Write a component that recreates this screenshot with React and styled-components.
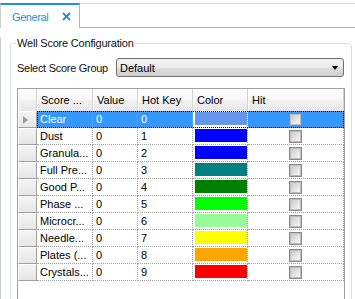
import React from "react";
import styled, { createGlobalStyle } from "styled-components";

const GlobalStyle = createGlobalStyle`
  html, body {
    margin: 0;
    padding: 0;
    background: #fff;
  }
  body {
    font-family: "Liberation Sans", Arial, sans-serif;
    font-size: 11px;
    color: #000;
  }
`;

//score rows shown in the grid
const scores = [
  { name: "Clear", color: "#6495ed" },
  { name: "Dust", color: "#0000ff" },
  { name: "Granula...", color: "#0000ff" },
  { name: "Full Pre...", color: "#008080" },
  { name: "Good P...", color: "#008000" },
  { name: "Phase ...", color: "#00ff00" },
  { name: "Microcr...", color: "#98fb98" },
  { name: "Needle...", color: "#ffff00" },
  { name: "Plates (...", color: "#ffa500" },
  { name: "Crystals...", color: "#ff0000" },
];

const columns = ["Score ...", "Value", "Hot Key", "Color", "Hit"];

const CloseIcon = () => (
  <svg width="9" height="9" viewBox="0 0 9 9">
    <path d="M1 1 L8 8 M8 1 L1 8" stroke="#1e8fe8" strokeWidth="1.8" />
  </svg>
);

const App = () => {
  return (
    <StyledWindow>
      <GlobalStyle />
      <StyledTabStrip>
        <StyledTab>
          <span>General</span>
          <StyledClose>
            <CloseIcon />
          </StyledClose>
        </StyledTab>
        <StyledTabFiller />
      </StyledTabStrip>

      <StyledTabPage>
        <StyledGroupBox>
          <StyledLegend>Well Score Configuration</StyledLegend>

          <StyledSelectRow>
            <StyledLabel>Select Score Group</StyledLabel>
            <StyledCombo>
              <span>Default</span>
              <StyledArrow />
            </StyledCombo>
          </StyledSelectRow>

          <StyledGrid>
            <StyledHeaderRow>
              <StyledHeaderCell />
              {columns.map((c) => (
                <StyledHeaderCell key={c}>{c}</StyledHeaderCell>
              ))}
            </StyledHeaderRow>

            {scores.map((s, i) => (
              <StyledRow key={s.name}>
                <StyledRowHeader>{i === 0 && <StyledPointer />}</StyledRowHeader>
                <StyledCells $selected={i === 0}>
                  <StyledCell $selected={i === 0}>{s.name}</StyledCell>
                  <StyledCell $selected={i === 0}>0</StyledCell>
                  <StyledCell $selected={i === 0}>{i}</StyledCell>
                  <StyledColorCell>
                    <StyledSwatch $color={s.color} />
                  </StyledColorCell>
                  <StyledCheckCell $selected={i === 0}>
                    <StyledCheckBox />
                  </StyledCheckCell>
                </StyledCells>
              </StyledRow>
            ))}
          </StyledGrid>
        </StyledGroupBox>
      </StyledTabPage>
    </StyledWindow>
  );
};

const StyledWindow = styled.div`
  width: 355px;
  height: 299px;
  overflow: hidden;
  background: #fff;
`;

const StyledTabStrip = styled.div`
  display: flex;
  padding-top: 3px;
`;

const StyledTab = styled.div`
  box-sizing: border-box;
  width: 80px;
  height: 25px;
  display: flex;
  align-items: center;
  padding-left: 11px;
  border-top: 2px solid #1e8fe8;
  border-left: 1px solid #cfcfcf;
  border-right: 1px solid #b4b4b4;
  color: #1e8fe8;
  letter-spacing: -0.4px;
`;

const StyledClose = styled.span`
  display: flex;
  margin-left: 14px;
`;

const StyledTabFiller = styled.div`
  box-sizing: border-box;
  flex: 1;
  height: 25px;
  border-top: 1px solid #d9d9d9;
  border-bottom: 1px solid #b4b4b4;
`;

const StyledTabPage = styled.div`
  box-sizing: border-box;
  height: 271px;
  padding-left: 9px;
  border-left: 1px solid #cfcfcf;
`;

const StyledGroupBox = styled.fieldset`
  box-sizing: border-box;
  width: 342px;
  height: 300px;
  min-width: 0;
  margin: 9px 0 0 0;
  padding: 8px 6px 0 6px;
  border: 1px solid #d5dfe5;
  border-radius: 3px;
`;

const StyledLegend = styled.legend`
  padding: 0 1px;
  margin-left: -1px;
  line-height: 13px;
  letter-spacing: -0.2px;
  color: #111;
`;

const StyledSelectRow = styled.div`
  display: flex;
  align-items: center;
  height: 19px;
`;

const StyledLabel = styled.span`
  width: 99px;
  flex-shrink: 0;
  letter-spacing: -0.28px;
  color: #111;
`;

const StyledCombo = styled.div`
  box-sizing: border-box;
  width: 228px;
  height: 19px;
  display: flex;
  align-items: center;
  justify-content: space-between;
  padding: 0 5px 0 3px;
  border: 1px solid #707070;
  border-radius: 3px;
  background: linear-gradient(#f2f2f2 0%, #ebebeb 50%, #dddddd 51%, #cfcfcf 100%);
`;

const StyledArrow = styled.span`
  width: 0;
  height: 0;
  border-top: 4px solid #000;
  border-left: 3.5px solid transparent;
  border-right: 3.5px solid transparent;
`;

const StyledGrid = styled.div`
  box-sizing: border-box;
  width: 328px;
  height: 240px;
  margin-top: 11px;
  border: 1px solid #a0a0a0;
  background: #fff;
`;

const StyledHeaderRow = styled.div`
  display: grid;
  grid-template-columns: 19px 56px 45px 55px 55px 96px;
  height: 22px;
`;

const StyledHeaderCell = styled.div`
  box-sizing: border-box;
  display: flex;
  align-items: center;
  padding-left: 4px;
  border-right: 1px solid #d5d5d5;
  box-shadow: inset 1px 0 0 #fff;
  background: linear-gradient(#ffffff 0%, #f7f8fa 45%, #f0f0f0 55%, #e6e6e6 100%);
  white-space: nowrap;
  overflow: hidden;
`;

const StyledRow = styled.div`
  display: flex;
  height: 17px;
`;

const StyledRowHeader = styled.div`
  box-sizing: border-box;
  width: 19px;
  height: 17px;
  display: flex;
  align-items: center;
  padding-left: 4px;
  border-top: 1px solid #fff;
  border-left: 1px solid #fff;
  border-right: 1px solid #a0a0a0;
  border-bottom: 1px solid #a0a0a0;
  background: linear-gradient(#f4f4f4, #e6e6e6);
`;

const StyledPointer = styled.span`
  width: 0;
  height: 0;
  border-left: 5px solid #9c9c9c;
  border-top: 4.5px solid transparent;
  border-bottom: 4.5px solid transparent;
`;

const StyledCells = styled.div`
  display: grid;
  grid-template-columns: 56px 45px 55px 55px 96px;
  outline: ${(p) => (p.$selected ? "1px dotted #000" : "none")};
  outline-offset: -1px;
`;

const StyledCell = styled.div`
  box-sizing: border-box;
  height: 17px;
  padding-left: 3px;
  line-height: 16px;
  white-space: nowrap;
  overflow: hidden;
  border-right: 1px dotted #a0a0a0;
  border-bottom: 1px dotted #a0a0a0;
  background: ${(p) => (p.$selected ? "#3399ff" : "#fff")};
  color: ${(p) => (p.$selected ? "#fff" : "#000")};
`;

const StyledColorCell = styled(StyledCell)`
  padding: 1px 0 2px 2px;
`;

const StyledSwatch = styled.div`
  height: 13px;
  background: ${(p) => p.$color};
`;

const StyledCheckCell = styled(StyledCell)`
  display: flex;
  align-items: center;
  justify-content: center;
  padding-left: 0;
`;

const StyledCheckBox = styled.span`
  box-sizing: border-box;
  width: 13px;
  height: 13px;
  border: 1px solid #8a8a8a;
  box-shadow: inset 0 0 0 1px #bdbdbd;
  background: linear-gradient(135deg, #c4c4c4 0%, #e4e4e4 55%, #ffffff 100%);
`;

export default App;
